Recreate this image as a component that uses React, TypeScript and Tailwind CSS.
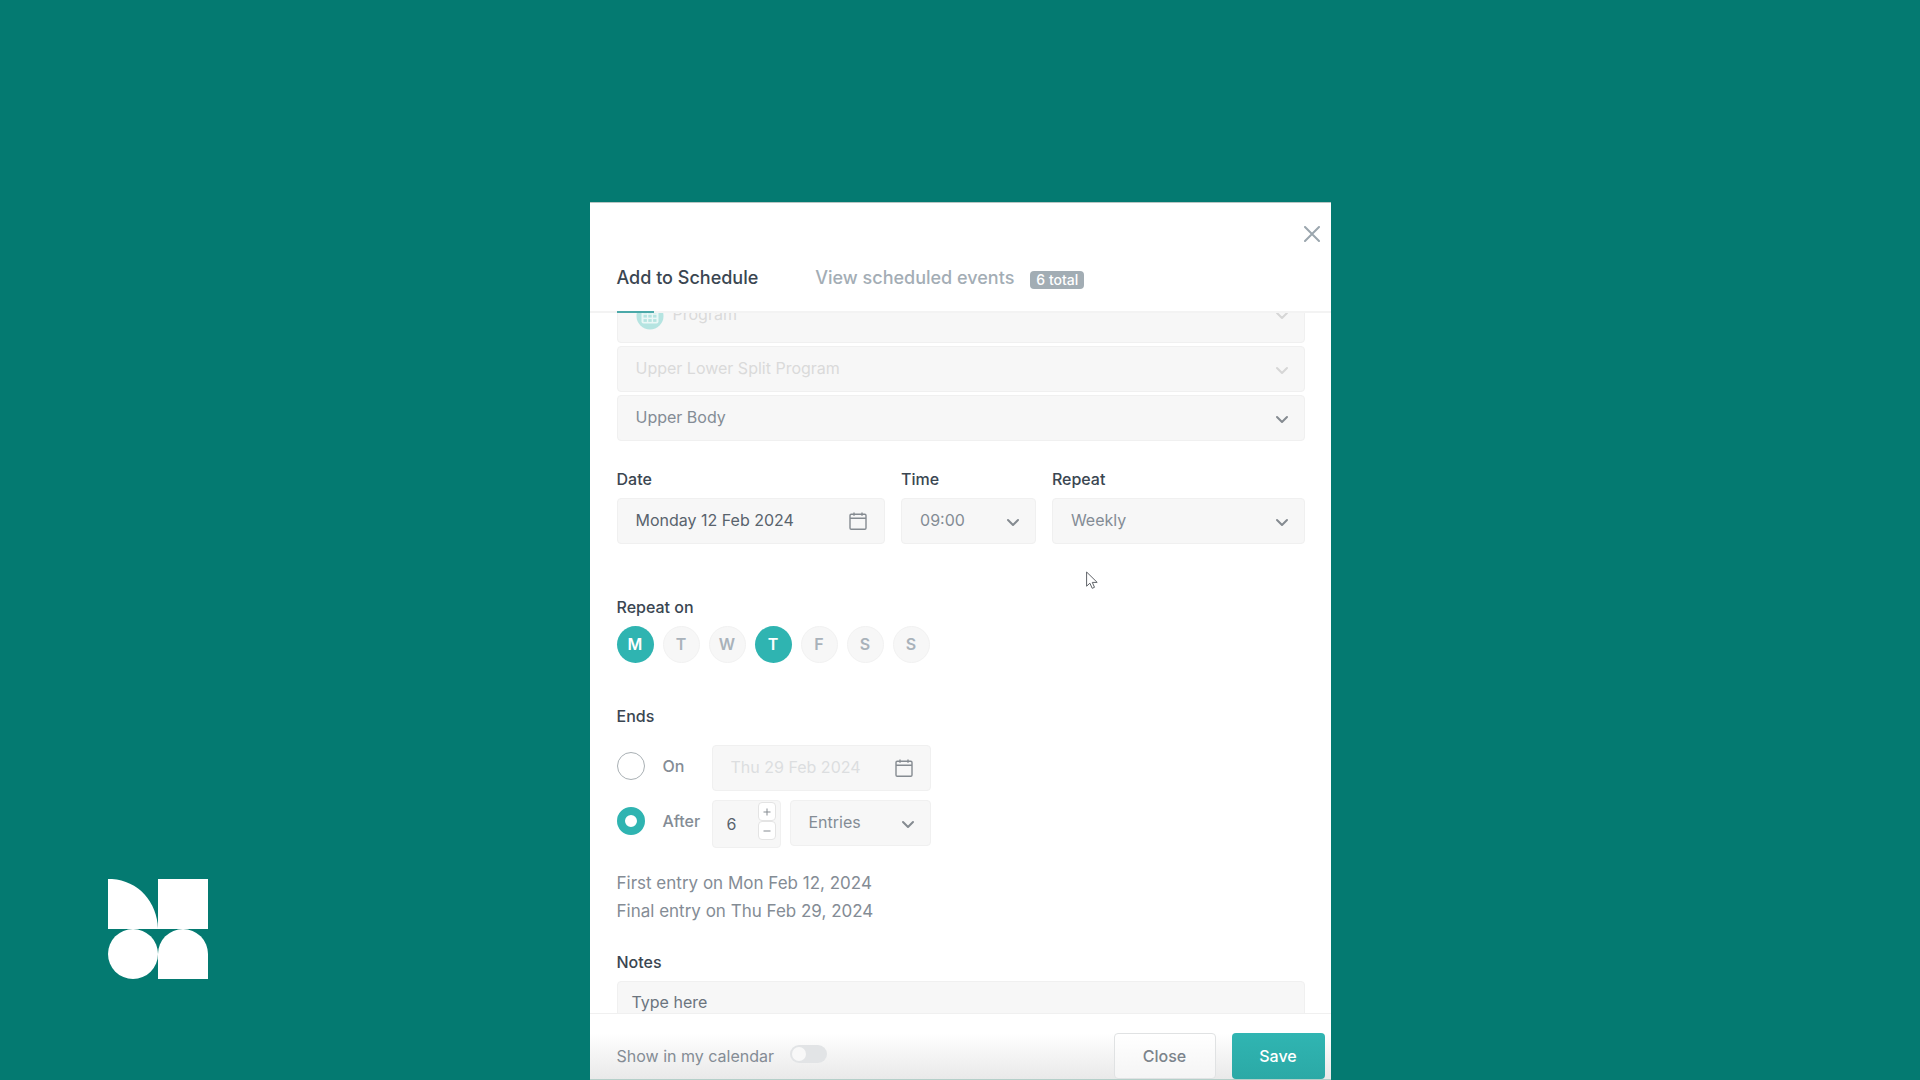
import { useState } from "react";
import type { ReactNode, SelectHTMLAttributes } from "react";

const FIELD =
  "w-full rounded border border-[#f0f0f0] bg-[#f7f7f7] text-base outline-none focus:border-[#2fb4b1]";
const LABEL = "block text-base leading-6 font-medium text-[#3a4651]";

const DAYS = [
  { id: "mon", letter: "M", name: "Monday" },
  { id: "tue", letter: "T", name: "Tuesday" },
  { id: "wed", letter: "W", name: "Wednesday" },
  { id: "thu", letter: "T", name: "Thursday" },
  { id: "fri", letter: "F", name: "Friday" },
  { id: "sat", letter: "S", name: "Saturday" },
  { id: "sun", letter: "S", name: "Sunday" },
];

function Chevron({ className }: { className: string }) {
  return (
    <svg viewBox="0 0 14 9" className={`h-[9px] w-[14px] ${className}`} fill="none" stroke="currentColor" strokeWidth="2">
      <path d="M2 2l5 5 5-5" strokeLinecap="round" strokeLinejoin="round" />
    </svg>
  );
}

function CalendarIcon() {
  return (
    <svg viewBox="0 0 18 18" className="h-[18px] w-[18px] text-[#858b91]" fill="none" stroke="currentColor" strokeWidth="1.4">
      <rect x="1" y="2.2" width="16" height="15" rx="1.2" />
      <path d="M1 6.3h16M5 .5v3.3M13 .5v3.3" />
    </svg>
  );
}

function ProgramIcon() {
  return (
    <svg viewBox="0 0 28 28" className="h-7 w-7">
      <circle cx="14" cy="14" r="13.5" fill="#b5e4e1" />
      <rect x="5.5" y="6" width="17" height="15.5" rx="2" fill="#eaf7f6" />
      <g fill="#b5e4e1">
        <rect x="7.5" y="8.5" width="3.4" height="2.8" />
        <rect x="12.3" y="8.5" width="3.4" height="2.8" />
        <rect x="17.1" y="8.5" width="3.4" height="2.8" />
        <rect x="7.5" y="12.8" width="3.4" height="2.8" />
        <rect x="12.3" y="12.8" width="3.4" height="2.8" />
        <rect x="17.1" y="12.8" width="3.4" height="2.8" />
        <rect x="7.5" y="17.1" width="3.4" height="2.8" />
        <rect x="12.3" y="17.1" width="3.4" height="2.8" />
        <rect x="17.1" y="17.1" width="3.4" height="2.8" />
      </g>
    </svg>
  );
}

function Logo() {
  return (
    <svg viewBox="0 0 100 100" className="h-[100px] w-[100px]" fill="#fff" role="img" aria-label="Logo">
      <path d="M0 0h4c26 2 45 22 46 50H0z" />
      <rect x="50" y="0" width="50" height="50" />
      <circle cx="25" cy="75" r="25" />
      <path d="M50 100V75a25 25 0 0 1 50 0v25z" />
    </svg>
  );
}

interface SelectFieldProps extends SelectHTMLAttributes<HTMLSelectElement> {
  options: string[];
  tall?: boolean;
  icon?: ReactNode;
}

function SelectField({ options, tall, icon, disabled, ...rest }: SelectFieldProps) {
  return (
    <div className="relative">
      {icon && <span className="pointer-events-none absolute inset-y-0 left-[19px] flex items-center pt-1">{icon}</span>}
      <select
        {...rest}
        disabled={disabled}
        className={`${FIELD} block appearance-none pr-10 opacity-100 ${tall ? "h-[58px]" : "h-[46px] pb-0.5"} ${
          icon ? "pl-[55px]" : "pl-[18px]"
        } ${disabled ? "text-[#dadada]" : "text-[#848c95]"}`}
      >
        {options.map((o) => (
          <option key={o}>{o}</option>
        ))}
      </select>
      <span className="pointer-events-none absolute inset-y-0 right-4 flex items-center pt-0.5">
        <Chevron className={disabled ? "text-[#d6d6d6]" : "text-[#858b91]"} />
      </span>
    </div>
  );
}

function RadioButton({ id, checked, onChange }: { id: string; checked: boolean; onChange: () => void }) {
  return (
    <input
      id={id}
      type="radio"
      name="ends"
      checked={checked}
      onChange={onChange}
      className="h-7 w-7 shrink-0 appearance-none rounded-full border border-[#a9b0b4] bg-white checked:border-8 checked:border-[#2fb4b1]"
    />
  );
}

export default function App() {
  const [days, setDays] = useState<string[]>(["mon", "thu"]);
  const [ends, setEnds] = useState<"on" | "after">("after");
  const [entries, setEntries] = useState(6);
  const [showInCalendar, setShowInCalendar] = useState(false);

  const toggleDay = (id: string) => {
    setDays((prev) => (prev.includes(id) ? prev.filter((d) => d !== id) : [...prev, id]));
  };

  return (
    <div className="relative flex h-screen justify-center overflow-hidden bg-[#047a71] pt-[202px] font-['Inter','Liberation_Sans',sans-serif]">
      <div className="absolute bottom-[101px] left-[108px]">
        <Logo />
      </div>

      <div role="dialog" aria-label="Add to Schedule" className="relative flex w-full max-w-[741px] flex-col border-y border-t-[#b9c6c4] border-b-[#b4cfc9] bg-white">
        <header className="relative z-10 flex flex-col border-b-2 border-[#f3f3f3] bg-white">
          <div className="flex justify-end pt-[23px] pr-[11px]">
            <button type="button" aria-label="Close dialog" className="text-[#9ba6ae]">
              <svg viewBox="0 0 16 16" className="h-4 w-4" fill="none" stroke="currentColor" strokeWidth="2">
                <path d="M1 1l14 14M15 1 1 15" strokeLinecap="round" />
              </svg>
            </button>
          </div>
          <nav className="-mb-0.5 flex gap-[57px] pt-[22px] pl-[27px] text-lg font-medium">
            <button type="button" className="flex flex-col text-[#3a4651]">
              <span className="pb-[19px]">Add to Schedule</span>
              <span className="h-0.5 w-[37px] bg-[#4ba9a9]" />
            </button>
            <button type="button" className="flex items-start text-[#a3adb5]">
              View scheduled events
              <span className="mt-[7px] ml-4 rounded bg-[#a2adb4] px-1.5 text-sm leading-[18px] text-white">6 total</span>
            </button>
          </nav>
        </header>

        <main className="min-h-0 flex-1 overflow-hidden pr-[26px] pl-[27px]">
          <div className="-mt-7 flex flex-col gap-[3px]">
            <SelectField aria-label="Type" options={["Program"]} icon={<ProgramIcon />} tall disabled />
            <SelectField aria-label="Program" options={["Upper Lower Split Program"]} disabled />
            <SelectField aria-label="Workout" options={["Upper Body", "Lower Body"]} />
          </div>

          <div className="mt-[26px] grid grid-cols-[269fr_135fr_253fr] gap-4">
            <div>
              <label htmlFor="date" className={LABEL}>Date</label>
              <div className="relative mt-[7px]">
                <input id="date" defaultValue="Monday 12 Feb 2024" className={`${FIELD} block h-[46px] pb-0.5 pl-[18px] text-[#59636d]`} />
                <span className="pointer-events-none absolute inset-y-0 right-[18px] flex items-center">
                  <CalendarIcon />
                </span>
              </div>
            </div>
            <div>
              <label htmlFor="time" className={LABEL}>Time</label>
              <div className="mt-[7px]">
                <SelectField id="time" options={["09:00", "10:00"]} />
              </div>
            </div>
            <div>
              <label htmlFor="repeat" className={LABEL}>Repeat</label>
              <div className="mt-[7px]">
                <SelectField id="repeat" options={["Weekly", "Daily"]} />
              </div>
            </div>
          </div>

          <fieldset className="mt-[51px]">
            <legend className={LABEL}>Repeat on</legend>
            <div className="mt-[7px] flex gap-[9px]">
              {DAYS.map((d) => (
                <button
                  key={d.id}
                  type="button"
                  aria-label={d.name}
                  aria-pressed={days.includes(d.id)}
                  onClick={() => toggleDay(d.id)}
                  className={`h-[37px] w-[37px] rounded-full pb-0.5 text-base font-semibold ${
                    days.includes(d.id) ? "bg-[#2fb4b1] text-white" : "border border-[#f2f2f2] bg-[#f7f7f7] text-[#a9b2ba]"
                  }`}
                >
                  {d.letter}
                </button>
              ))}
            </div>
          </fieldset>

          <fieldset className="mt-[41px]">
            <legend className={LABEL}>Ends</legend>
            <div className="mt-[17px] flex w-[314px] items-start">
              <div className="flex h-[42px] items-center">
                <RadioButton id="ends-on" checked={ends === "on"} onChange={() => setEnds("on")} />
                <label htmlFor="ends-on" className="w-[67px] pl-[18px] text-base font-medium text-[#848c95]">On</label>
              </div>
              <div className="relative flex-1">
                <input
                  aria-label="End date"
                  disabled={ends !== "on"}
                  defaultValue="Thu 29 Feb 2024"
                  className={`${FIELD} block h-[46px] pb-0.5 pl-[18px] text-[#59636d] disabled:text-[#dcdee0]`}
                />
                <span className="pointer-events-none absolute inset-y-0 right-[18px] flex items-center">
                  <CalendarIcon />
                </span>
              </div>
            </div>
            <div className="mt-[9px] flex w-[314px] items-start">
              <div className="flex h-[42px] items-center">
                <RadioButton id="ends-after" checked={ends === "after"} onChange={() => setEnds("after")} />
                <label htmlFor="ends-after" className="w-[67px] pl-[18px] text-base font-medium text-[#848c95]">After</label>
              </div>
              <div className="flex h-12 w-[69px] items-start rounded border border-[#f0f0f0] bg-[#f7f7f7]">
                <input
                  aria-label="Number of entries"
                  value={entries}
                  onChange={(e) => setEntries(Number(e.target.value) || 0)}
                  className="h-[46px] w-[45px] bg-transparent pl-[14px] text-base text-[#59636d] outline-none"
                />
                <div className="flex flex-col pt-px">
                  <button
                    type="button"
                    aria-label="More entries"
                    onClick={() => setEntries(entries + 1)}
                    className="flex h-[19px] w-[18px] items-center justify-center rounded border border-[#e4e4e4] bg-white text-[#858b91]"
                  >
                    <svg viewBox="0 0 8 8" className="h-2 w-2" stroke="currentColor"><path d="M4 .5v7M.5 4h7" /></svg>
                  </button>
                  <button
                    type="button"
                    aria-label="Fewer entries"
                    onClick={() => setEntries(Math.max(1, entries - 1))}
                    className="flex h-[19px] w-[18px] items-center justify-center rounded border border-[#e4e4e4] bg-white text-[#858b91]"
                  >
                    <svg viewBox="0 0 8 8" className="h-2 w-2" stroke="currentColor"><path d="M.5 4h7" /></svg>
                  </button>
                </div>
              </div>
              <div className="ml-[9px] flex-1">
                <SelectField aria-label="Unit" options={["Entries", "Weeks"]} />
              </div>
            </div>
          </fieldset>

          <div className="mt-[21px] text-[17px] leading-7 text-[#848c95]">
            <p>First entry on Mon Feb 12, 2024</p>
            <p>Final entry on Thu Feb 29, 2024</p>
          </div>

          <div className="mt-[25px]">
            <label htmlFor="notes" className={LABEL}>Notes</label>
            <textarea
              id="notes"
              placeholder="Type here"
              className="mt-[7px] block h-24 w-full resize-none rounded border border-[#f0f0f0] bg-[#f7f7f7] px-[14px] py-2 text-base text-[#59636d] outline-none placeholder:text-[#6b747e]"
            />
          </div>
        </main>

        <footer className="flex items-center justify-between border-t border-[#f0f0f0] bg-linear-to-b from-white from-30% to-[#e9e9e9] pt-[19px] pr-1.5 pl-[27px]">
          <label className="flex items-start gap-4 pb-px text-base text-[#848c95]">
            Show in my calendar
            <input
              type="checkbox"
              role="switch"
              checked={showInCalendar}
              onChange={() => setShowInCalendar(!showInCalendar)}
              className="mt-px h-[18px] w-[37px] appearance-none rounded-full bg-[#e2e4e6] p-0.5 before:block before:h-[14px] before:w-[14px] before:rounded-full before:bg-[#f8f8f8] checked:bg-[#2fb4b1] checked:before:ml-auto"
            />
          </label>
          <div className="flex gap-4">
            <button type="button" className="h-[46px] w-[102px] rounded border border-[#e0e2e3] bg-white/50 text-base font-medium text-[#7b838b]">
              Close
            </button>
            <button type="button" className="h-[46px] w-[93px] rounded bg-linear-to-b from-[#30b5b2] to-[#2ba9a6] text-base font-medium text-white">
              Save
            </button>
          </div>
        </footer>

        {/* mouse pointer */}
        <svg viewBox="0 0 12 18" className="pointer-events-none absolute top-[368px] left-[496px] h-[18px] w-3" fill="#fff" stroke="#5f6368">
          <path d="M.6 1v14.2l3.3-3 2.3 5.1 2.3-1-2.2-4.9h4.9z" strokeLinejoin="round" />
        </svg>
      </div>
    </div>
  );
}
